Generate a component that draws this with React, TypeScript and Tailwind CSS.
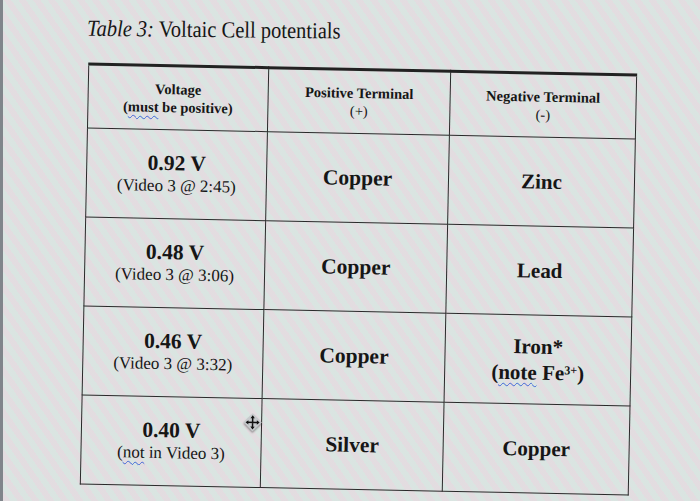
import React from 'react';

const serif = { fontFamily: '"Liberation Serif", "Times New Roman", serif' };

const MoveIcon = () => (
  <span className="absolute right-[-1px] top-[14px] flex h-[19px] w-[19px] items-center justify-center">
    <span className="absolute h-[13px] w-[13px] rotate-45 bg-[#c6c9cc] shadow-[1px_1px_2px_rgba(0,0,0,0.35)]" />
    <svg viewBox="0 0 16 16" className="relative h-[15px] w-[15px]" fill="#111" stroke="#111">
      <path d="M8 2v12M2 8h12" strokeWidth="1.6" />
      <path d="M8 0.5 10.3 3.5H5.7Z M8 15.5 10.3 12.5H5.7Z M0.5 8 3.5 5.7V10.3Z M15.5 8 12.5 5.7V10.3Z" stroke="none" />
    </svg>
  </span>
);

const wavy = 'underline decoration-wavy decoration-[#3f66d6] decoration-1 underline-offset-[3px]';

type Row = { v: string; note: React.ReactNode; pos: string; neg: React.ReactNode; icon?: boolean };

const rows: Row[] = [
  { v: '0.92 V', note: '(Video 3 @ 2:45)', pos: 'Copper', neg: 'Zinc' },
  { v: '0.48 V', note: '(Video 3 @ 3:06)', pos: 'Copper', neg: 'Lead' },
  {
    v: '0.46 V',
    note: '(Video 3 @ 3:32)',
    pos: 'Copper',
    neg: (
      <>
        <div>Iron*</div>
        <div>
          (<span className={wavy}>note</span> Fe<sup className="text-[12px]">3+</sup>)
        </div>
      </>
    ),
  },
  {
    v: '0.40 V',
    note: (
      <>
        (<span className={wavy}>not</span> in Video 3)
      </>
    ),
    pos: 'Silver',
    neg: 'Copper',
    icon: true,
  },
];

export default function App() {
  return (
    <div
      className="relative h-[501px] w-[700px] overflow-hidden border-l-[3px] border-[#80858b] bg-[#dfe3e4] text-[#161616]"
      style={serif}
    >
      <div className="absolute inset-0 bg-[repeating-linear-gradient(55deg,rgba(235,205,215,0.3)_0px,rgba(235,205,215,0.3)_6px,rgba(205,232,218,0.28)_6px,rgba(205,232,218,0.28)_12px)]" />
      <div className="relative">
        <h1 className="ml-[84px] mt-[16px] origin-left rotate-[0.6deg] scale-y-[1.12] text-[20.5px] leading-[24px]">
          <i>Table 3:</i> Voltaic Cell potentials
        </h1>
        <table className="ml-[81px] mt-[28px] rotate-[1.15deg] border-collapse border-t-[3px] border-[#222]">
          <colgroup>
            <col className="w-[180px]" />
            <col className="w-[182px]" />
            <col className="w-[186px]" />
          </colgroup>
          <thead>
            <tr className="h-[64px] text-center text-[14.5px] font-bold leading-[18px]">
              <th className="border-[1.5px] border-t-0 border-[#2a2a2a]">
                <div>Voltage</div>
                <div>
                  (<span className={wavy}>must</span> be positive)
                </div>
              </th>
              <th className="border-[1.5px] border-t-0 border-[#2a2a2a]">
                <div>Positive Terminal</div>
                <div className="font-normal">(+)</div>
              </th>
              <th className="border-[1.5px] border-t-0 border-[#2a2a2a]">
                <div>Negative Terminal</div>
                <div className="font-normal">(-)</div>
              </th>
            </tr>
          </thead>
          <tbody>
            {rows.map((r, i) => (
              <tr key={i} className="h-[89px] text-center">
                <td className="relative border-[1.5px] border-[#2a2a2a]">
                  <div className="text-[21.5px] font-bold leading-[24px]">{r.v}</div>
                  <div className="text-[17px] leading-[22px]">{r.note}</div>
                  {r.icon && <MoveIcon />}
                </td>
                <td className="border-[1.5px] border-[#2a2a2a] text-[21.5px] font-bold leading-[26px]">
                  {r.pos}
                </td>
                <td className="border-[1.5px] border-[#2a2a2a] text-[21px] font-bold leading-[26px]">
                  {r.neg}
                </td>
              </tr>
            ))}
          </tbody>
        </table>
      </div>
    </div>
  );
}
